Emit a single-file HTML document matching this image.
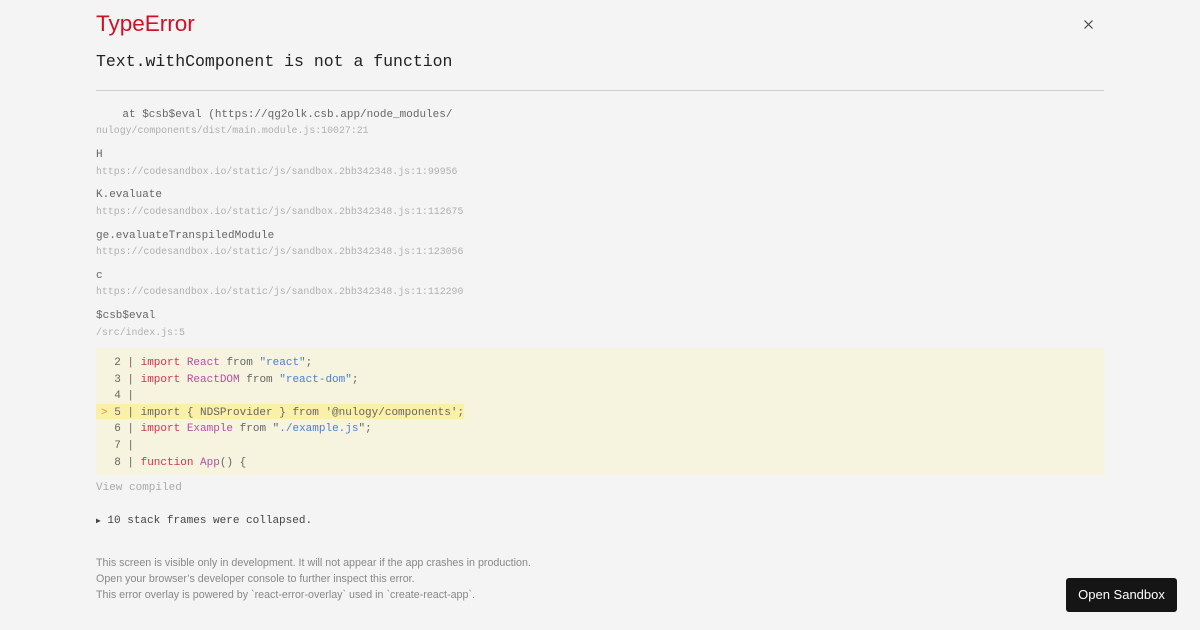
<!DOCTYPE html>
<html><head><meta charset="utf-8"><style>
body{margin:0;width:1200px;height:630px;background:#f4f4f4;overflow:hidden;position:relative;font-family:"Liberation Sans",sans-serif}
.a{position:absolute;white-space:pre}
.m{font-family:"Liberation Mono",monospace}
.f{font-size:11px;color:#666}
.u{font-size:9.9px;color:#b0b0b0}
.k{color:#d6334e}.t{color:#b64fa0}.s{color:#4d7ed6}.p{color:#666}
</style></head><body>
<div class="a" style="left:96px;top:11px;font-size:22.5px;color:#ce1126">TypeError</div>
<svg class="a" style="left:1084px;top:20px" width="9" height="9"><path d="M0.5 0.5L8.5 8.5M8.5 0.5L0.5 8.5" stroke="#444" stroke-width="1.2"/></svg>
<div class="a m" style="left:96px;top:52px;font-size:16.5px;color:#222">Text.withComponent is not a function</div>
<div class="a" style="left:96px;top:90px;width:1008px;height:1px;background:#ccc"></div>
<div class="a m f" style="left:96px;top:109px">    at $csb$eval (https://qg2olk.csb.app/node_modules/</div>
<div class="a m u" style="left:96px;top:125px">nulogy/components/dist/main.module.js:10027:21</div>
<div class="a m f" style="left:96px;top:149px">H</div>
<div class="a m u" style="left:96px;top:166px">https://codesandbox.io/static/js/sandbox.2bb342348.js:1:99956</div>
<div class="a m f" style="left:96px;top:189px">K.evaluate</div>
<div class="a m u" style="left:96px;top:206px">https://codesandbox.io/static/js/sandbox.2bb342348.js:1:112675</div>
<div class="a m f" style="left:96px;top:230px">ge.evaluateTranspiledModule</div>
<div class="a m u" style="left:96px;top:246px">https://codesandbox.io/static/js/sandbox.2bb342348.js:1:123056</div>
<div class="a m f" style="left:96px;top:270px">c</div>
<div class="a m u" style="left:96px;top:286px">https://codesandbox.io/static/js/sandbox.2bb342348.js:1:112290</div>
<div class="a m f" style="left:96px;top:310px">$csb$eval</div>
<div class="a m u" style="left:96px;top:327px">/src/index.js:5</div>
<div class="a" style="left:96px;top:348px;width:1008px;height:127px;background:#f6f3df"></div>
<div class="a" style="left:96px;top:404px;width:368px;height:15px;background:#faf0a8"></div>
<div class="a m" style="left:101px;top:355px;font-size:11px;line-height:16.6px;color:#666">  2 | <span class="k">import</span> <span class="t">React</span> from <span class="s">"react"</span>;
  3 | <span class="k">import</span> <span class="t">ReactDOM</span> from <span class="s">"react-dom"</span>;
  4 |
<span style="color:#d59a3a">&gt;</span> 5 | import { NDSProvider } from '@nulogy/components';
  6 | <span class="k">import</span> <span class="t">Example</span> from "<span class="s">./example.js</span>";
  7 |
  8 | <span class="k">function</span> <span class="t">App</span>() {</div>
<div class="a m" style="left:96px;top:482px;font-size:11px;color:#aaa">View compiled</div>
<div class="a m" style="left:96px;top:515px;font-size:11px;color:#444"><span style="font-size:8px">▶</span> 10 stack frames were collapsed.</div>
<div class="a" style="left:96px;top:555px;font-size:10.7px;line-height:16px;color:#888">This screen is visible only in development. It will not appear if the app crashes in production.
Open your browser’s developer console to further inspect this error.
This error overlay is powered by `react-error-overlay` used in `create-react-app`.</div>
<div class="a" style="left:1066px;top:578px;width:111px;height:34px;background:#151515;border-radius:3px;color:#fff;font-size:13px;line-height:34px;text-align:center">Open Sandbox</div>
</body></html>
